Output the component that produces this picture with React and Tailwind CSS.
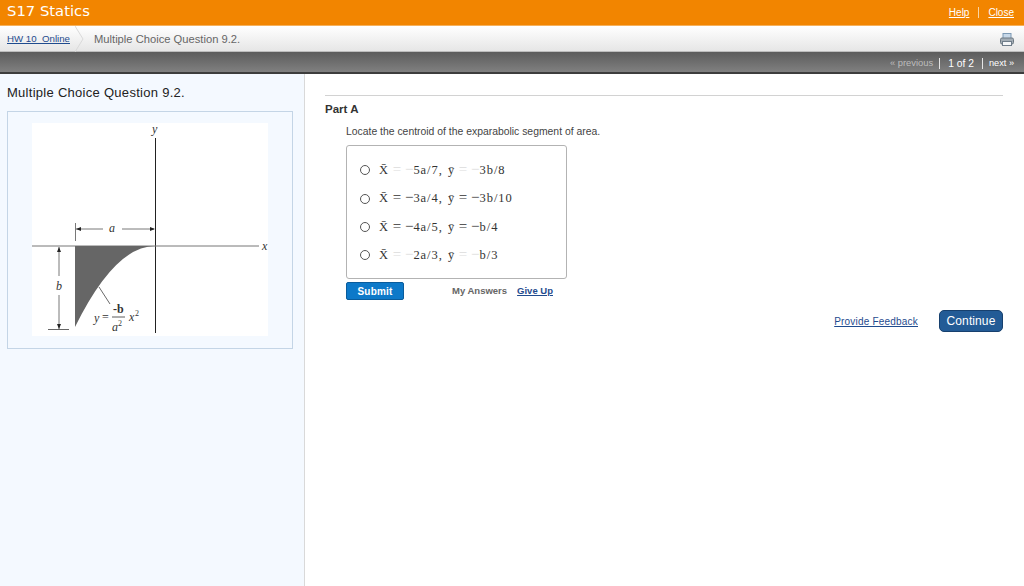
function Option({ x, y, faint }) {
  const eq = faint ? "text-[#dcdcdc]" : "text-[#333]";
  return (
    <div className="flex items-center h-[28.4px]">
      <span className="w-[10px] h-[10px] rounded-full border border-[#555] bg-white mr-[9px] shrink-0" />
      <span className="font-['Liberation_Serif',serif] text-[12.5px] tracking-[0.95px] text-[#333] whitespace-pre">
        X̄
        <span className={`${eq} text-[15px] leading-none tracking-normal`}> = −</span>
        {x}, <span className="ml-[1px] inline-block border-0">{"y\u0304"}</span>
        <span className={`${eq} text-[15px] leading-none tracking-normal`}> = −</span>
        {y}
      </span>
    </div>
  );
}

function Figure() {
  return (
    <svg viewBox="32 123 236 213" className="w-[236px] h-[213px] bg-white block">
      <line x1="155.5" y1="138" x2="155.5" y2="333" stroke="#222" strokeWidth="1" />
      <line x1="32" y1="246" x2="259" y2="246" stroke="#777" strokeWidth="1" />
      <path d="M75 246 H155 Q115 246 75 327 Z" fill="#666" />
      <line x1="75.5" y1="223" x2="75.5" y2="241" stroke="#555" strokeWidth="0.8" />
      <line x1="76" y1="229" x2="103" y2="229" stroke="#555" strokeWidth="0.8" />
      <line x1="122" y1="229" x2="154" y2="229" stroke="#555" strokeWidth="0.8" />
      <path d="M76 229 l5 -2 v4 Z M155 229 l-5 -2 v4 Z" fill="#222" />
      <line x1="59" y1="247" x2="59" y2="276" stroke="#555" strokeWidth="0.8" />
      <line x1="59" y1="295" x2="59" y2="329" stroke="#555" strokeWidth="0.8" />
      <path d="M59 247 l-2 5 h4 Z M59 329 l-2 -5 h4 Z" fill="#222" />
      <line x1="48" y1="329.5" x2="69" y2="329.5" stroke="#666" strokeWidth="1" />
      <line x1="99" y1="287" x2="110" y2="304" stroke="#444" strokeWidth="0.8" />
      <line x1="112" y1="317" x2="125" y2="317" stroke="#333" strokeWidth="0.8" />
      <g fontFamily="'Liberation Serif', serif" fill="#333" fontSize="12">
        <text x="152" y="133" fontStyle="italic">y</text>
        <text x="109" y="232" fontStyle="italic">a</text>
        <text x="262" y="250" fontStyle="italic">x</text>
        <text x="56" y="290" fontStyle="italic">b</text>
        <text x="94" y="322" fontStyle="italic">y</text>
        <text x="102" y="321">=</text>
        <text x="113" y="313" fontWeight="bold">-b</text>
        <text x="112" y="331" fontStyle="italic">a</text>
        <text x="118" y="326" fontSize="8">2</text>
        <text x="129" y="321" fontStyle="italic">x</text>
        <text x="135" y="316" fontSize="8">2</text>
      </g>
    </svg>
  );
}

export default function App() {
  return (
    <div className="w-[1024px] h-[586px] overflow-hidden flex flex-col bg-white font-['Liberation_Sans',Arial,sans-serif]">
      <header className="h-[26px] bg-[#f28500] border-b border-[#f6b15c] flex items-center justify-between pl-[7px] pr-[10px]">
        <span className="font-['DejaVu_Sans',sans-serif] text-[14.8px] leading-[20px] mb-[3px] text-white">S17 Statics</span>
        <div className="flex items-center text-[10px] text-white mb-[1px]">
          <a className="underline">Help</a>
          <span className="mx-[9px] w-px h-[11px] bg-[#f9d4a4]" />
          <a className="underline">Close</a>
        </div>
      </header>
      <div className="h-[26px] bg-gradient-to-b from-white to-[#e6e6e6] border-b border-[#bdbdbd] flex items-center pr-[10px]">
        <a className="ml-[7px] text-[9.7px] mt-[1px] text-[#1f4b8e] underline">HW 10&nbsp; Online</a>
        <svg viewBox="0 0 10 26" className="w-[10px] h-[26px] ml-[5px]">
          <path d="M0 0 L8 13 L0 26" fill="none" stroke="#d9d9d9" strokeWidth="1" />
        </svg>
        <span className="ml-[9px] mt-[1px] text-[11.2px] text-[#666]">Multiple Choice Question 9.2.</span>
        <svg viewBox="0 0 14 13" className="ml-auto mt-[1px] w-[14px] h-[13px]">
          <rect x="3" y="0.5" width="8" height="5" fill="#c7d8e8" stroke="#7d9ab5" />
          <rect x="0.5" y="5" width="13" height="6" rx="1.5" fill="#a3adb5" stroke="#6d7982" />
          <rect x="2.5" y="8.5" width="9" height="4" fill="#f4f6f8" stroke="#6f7d8a" />
        </svg>
      </div>
      <div className="h-[22px] bg-gradient-to-b from-[#5c5c5c] to-[#808080] border-b-2 border-[#3d3d3d] flex items-center justify-end pr-[10px] pt-[3px]">
        <span className="text-[#bdbdbd] text-[9.4px]">« previous</span>
        <span className="ml-[6px] mr-[8px] w-px h-[11px] bg-[#e5e5e5]" />
        <span className="text-white text-[10.3px]">1 of 2</span>
        <span className="ml-[8px] mr-[6px] w-px h-[11px] bg-[#e5e5e5]" />
        <span className="text-white text-[9.2px]">next »</span>
      </div>
      <div className="flex-1 flex min-h-0">
        <aside className="w-[305px] shrink-0 bg-[#f4f9ff] border-r border-[#d9d9d9] pl-[7px] pr-[11px]">
          <h1 className="mt-[10px] h-[17px] leading-[17px] text-[13px] text-[#222] tracking-[0.28px] font-normal">Multiple Choice Question 9.2.</h1>
          <div className="mt-[10px] h-[238px] border border-[#c4d5e6] pt-[11px] pl-[24px]">
            <Figure />
          </div>
        </aside>
        <main className="flex-1 pl-[20px] pr-[21px] pt-[21px]">
          <div className="border-t border-[#d2d2d2] pt-[7px]">
            <h2 className="h-[13px] leading-[13px] text-[11.5px] font-bold text-[#333]">Part A</h2>
            <p className="mt-[9px] ml-[21px] h-[13px] leading-[13px] text-[10.4px] text-[#444]">Locate the centroid of the exparabolic segment of area.</p>
            <div className="mt-[7px] ml-[21px] w-[221px] h-[134px] border border-[#b3b3b3] rounded-[3px] pt-[10px] pl-[13px]">
              <Option x="5a/7" y="3b/8" faint />
              <Option x="3a/4" y="3b/10" />
              <Option x="4a/5" y="b/4" />
              <Option x="2a/3" y="b/3" faint />
            </div>
            <div className="mt-[3px] ml-[21px] flex items-center h-[18px]">
              <button className="w-[58px] h-[18px] rounded-[2px] bg-[#0d79c9] border border-[#0a5c9c] text-white text-[10px] font-bold tracking-[0.2px]">Submit</button>
              <span className="ml-[48px] text-[9.5px] font-bold text-[#666]">My Answers</span>
              <a className="ml-[10px] text-[9.5px] font-bold text-[#1f4b8e] underline">Give Up</a>
            </div>
            <div className="mt-[10px] flex items-center justify-end">
              <a className="text-[10px] text-[#1f4b8e] underline tracking-[0.2px]">Provide Feedback</a>
              <button className="ml-[21px] w-[64px] h-[22px] rounded-[5px] bg-[#235b96] border border-[#17406e] text-white text-[12px] tracking-[0.1px]">Continue</button>
            </div>
          </div>
        </main>
      </div>
    </div>
  );
}
